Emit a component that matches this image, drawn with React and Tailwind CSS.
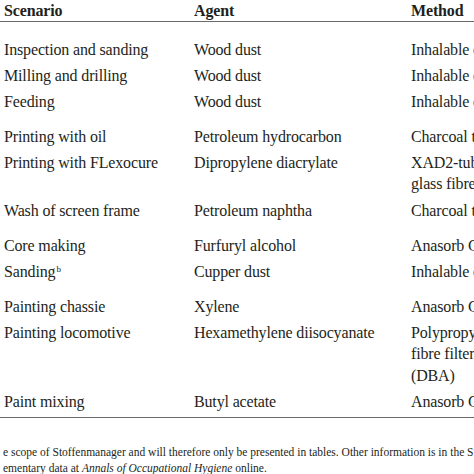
import React from "react";

const groups = [
  [
    ["Inspection and sanding", "Wood dust", ["Inhalable dust sampler"]],
    ["Milling and drilling", "Wood dust", ["Inhalable dust sampler"]],
    ["Feeding", "Wood dust", ["Inhalable dust sampler"]],
  ],
  [
    ["Printing with oil", "Petroleum hydrocarbon", ["Charcoal tube"]],
    ["Printing with FLexocure", "Dipropylene diacrylate", ["XAD2-tube with", "glass fibre filter"]],
    ["Wash of screen frame", "Petroleum naphtha", ["Charcoal tube"]],
  ],
  [
    ["Core making", "Furfuryl alcohol", ["Anasorb CSC"]],
    ["Sanding", "Cupper dust", ["Inhalable dust sampler"], "b"],
  ],
  [
    ["Painting chassie", "Xylene", ["Anasorb CSC"]],
    ["Painting locomotive", "Hexamethylene diisocyanate", ["Polypropylene", "fibre filter with", "(DBA)"]],
    ["Paint mixing", "Butyl acetate", ["Anasorb CSC"]],
  ],
];

const Row = ({ scenario, agent, method, sup }) => (
  <div className="grid grid-cols-[190px_217px_1fr] pl-[4px] py-[2.5px] leading-[21px]">
    <div className="whitespace-nowrap">
      {scenario}
      {sup && <sup className="text-[9px] ml-[1px]">{sup}</sup>}
    </div>
    <div className="whitespace-nowrap">{agent}</div>
    <div className={method.length > 1 ? "whitespace-nowrap leading-[21.5px]" : "whitespace-nowrap"}>
      {method.map((m) => (
        <div key={m}>{m}</div>
      ))}
    </div>
  </div>
);

export default function App() {
  return (
    <div
      className="w-[474px] h-[474px] overflow-hidden bg-white text-[#231f20] text-[16px] tracking-[-0.15px]"
      style={{ fontFamily: '"Liberation Serif", "Times New Roman", serif' }}
    >
      <div className="grid grid-cols-[190px_217px_1fr] pl-[4px] pt-0 h-[22px] leading-[21px] font-bold border-b-[1.5px] border-[#6b6b6b]">
        <div>Scenario</div>
        <div>Agent</div>
        <div>Method</div>
      </div>
      <div className="flex flex-col gap-[9px] pt-[14px] pb-[2px] border-b-[1.5px] border-[#6b6b6b]">
        {groups.map((g, i) => (
          <div key={i} className="flex flex-col">
            {g.map(([s, a, m, sup]) => (
              <Row key={s} scenario={s} agent={a} method={m} sup={sup} />
            ))}
          </div>
        ))}
      </div>
      <div className="pt-[26px] pl-[3px] text-[11.5px] leading-[16px] tracking-normal whitespace-nowrap">
        <div>e scope of Stoffenmanager and will therefore only be presented in tables. Other information is in the Supplementary</div>
        <div>
          ementary data at <i>Annals of Occupational Hygiene</i> online.
        </div>
      </div>
    </div>
  );
}
